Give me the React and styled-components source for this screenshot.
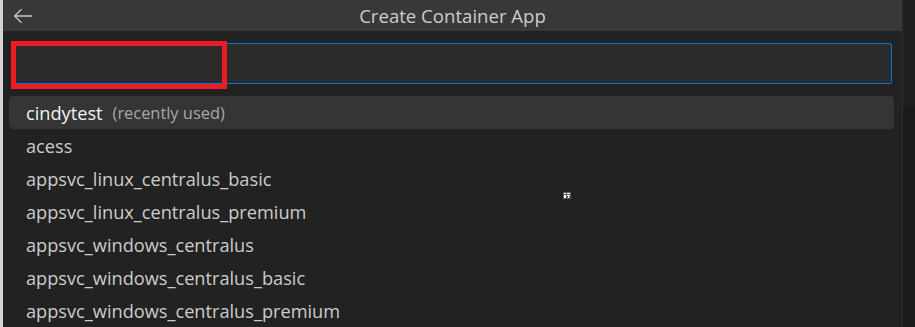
import React from "react";
import styled, { createGlobalStyle } from "styled-components";

const GlobalStyle = createGlobalStyle`
  html, body {
    margin: 0;
    padding: 0;
    background: #1f1f1f;
  }
  body {
    font-family: "Open Sans", "Noto Sans", sans-serif;
  }
`;

const Screen = styled.div`
  width: 915px;
  height: 327px;
  display: flex;
  overflow: hidden;
  background: #1a1a1a;
`;

const EdgeStrip = styled.div`
  width: 3px;
  background: #d4d4d4;
`;

const Panel = styled.div`
  width: 899px;
  display: flex;
  flex-direction: column;
  background: #222222;
  border-right: 1px solid #2e2e2e;
  position: relative;
`;

const Gutter = styled.div`
  flex: 1;
  display: flex;
  flex-direction: column;
  &:before {
    content: "";
    display: block;
    height: 107px;
    background: #1f1f1f;
  }
`;

const Header = styled.div`
  height: 32px;
  background: #383838;
  display: grid;
  grid-template-columns: 40px 1fr 40px;
  align-items: center;
`;

const BackButton = styled.div`
  display: flex;
  align-items: center;
  padding-left: 10px;
  color: #c5c5c5;
`;

const Title = styled.div`
  text-align: center;
  font-size: 18.6px;
  color: #cccccc;
`;

const InputRow = styled.div`
  padding: 12px 10px 0 9px;
`;

const InputBox = styled.div`
  height: 41px;
  box-sizing: border-box;
  background: #2b2b2b;
  outline: 1px solid #0078d4;
  outline-offset: -1px;
  border-radius: 2px;
  position: relative;
`;

const Highlight = styled.div`
  position: absolute;
  left: -1px;
  top: -2px;
  width: 206px;
  height: 38px;
  border: 5px solid #ed1c24;
`;

const List = styled.div`
  padding: 12px 8px 0 6px;
  display: flex;
  flex-direction: column;
`;

const Row = styled.div`
  height: 33px;
  flex: none;
  display: flex;
  align-items: center;
  padding-left: 17px;
  border-radius: 4px;
  background: ${(p) => (p.selected ? "#353535" : "transparent")};
  color: ${(p) => (p.selected ? "#f2f2f2" : "#cccccc")};
  font-size: 18.2px;
  white-space: nowrap;
`;

const Description = styled.span`
  margin-left: 10px;
  font-size: 16.4px;
  color: #a8a8a8;
`;

const CursorMark = styled.svg`
  position: absolute;
  left: 560px;
  top: 192px;
`;

const items = [
  "acess",
  "appsvc_linux_centralus_basic",
  "appsvc_linux_centralus_premium",
  "appsvc_windows_centralus",
  "appsvc_windows_centralus_basic",
  "appsvc_windows_centralus_premium",
];

const App = () => {
  return (
    <Screen>
      <GlobalStyle />
      <EdgeStrip />
      <Panel>
        <Header>
          <BackButton>
            <svg width="20" height="16" viewBox="0 0 20 16" fill="none">
              <path
                d="M19 8H1.8M8.5 1.2L1.7 8l6.8 6.8"
                stroke="currentColor"
                strokeWidth="1.4"
              />
            </svg>
          </BackButton>
          <Title>Create Container App</Title>
          <div />
        </Header>

        <InputRow>
          <InputBox>
            <Highlight />
          </InputBox>
        </InputRow>

        <List>
          <Row selected>
            cindytest<Description>(recently used)</Description>
          </Row>
          {items.map((name) => (
            <Row key={name}>{name}</Row>
          ))}
        </List>

        <CursorMark width="8" height="7" viewBox="0 0 8 7">
          <rect width="8" height="7" fill="#5a5a5a" />
          <rect x="1" y="1" width="2" height="1" fill="#ffffff" />
          <rect x="4" y="1" width="3" height="1" fill="#ffffff" />
          <rect x="1" y="3" width="2" height="3" fill="#ffffff" />
          <rect x="4" y="3" width="3" height="1" fill="#ffffff" />
          <rect x="5" y="3" width="1" height="3" fill="#ffffff" />
        </CursorMark>
      </Panel>
      <Gutter />
    </Screen>
  );
};

export default App;
